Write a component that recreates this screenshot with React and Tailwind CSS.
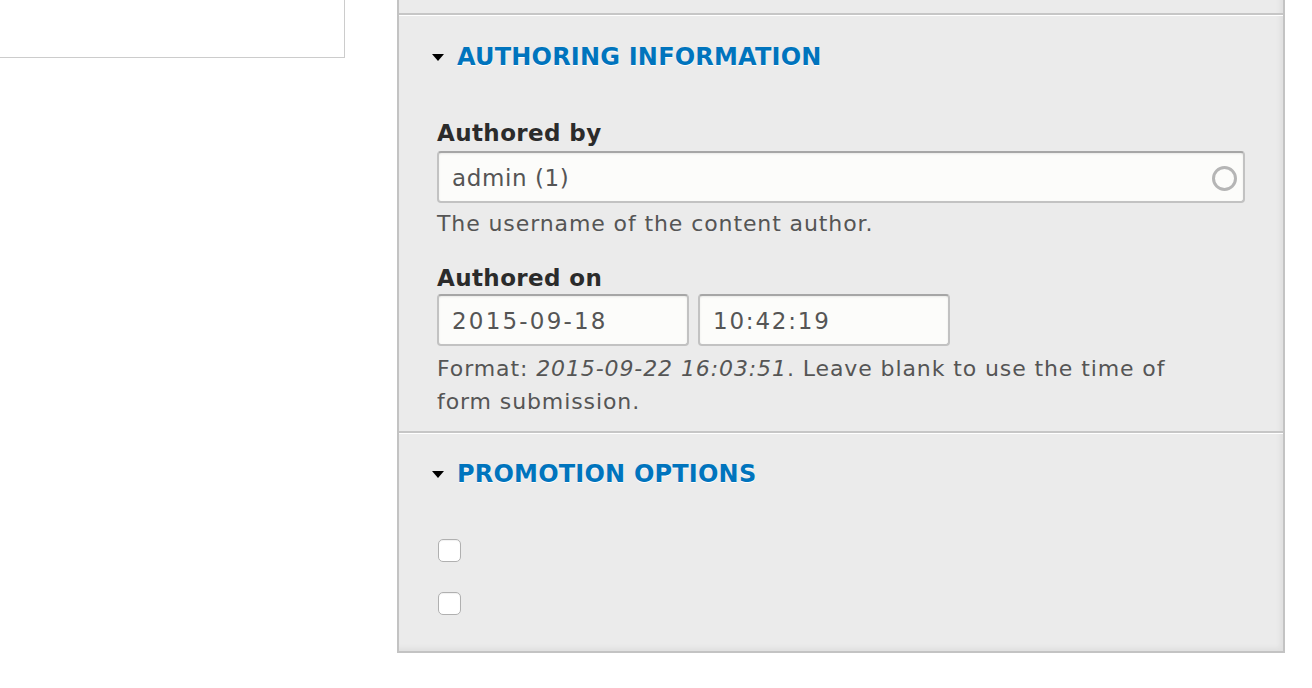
import React from "react";

const font = "font-['DejaVu_Sans','Liberation_Sans',sans-serif]";

function Caret() {
  return (
    <svg width="12" height="7" viewBox="0 0 12 7" className="shrink-0">
      <path d="M0 0 L12 0 L6 7 Z" fill="#000" />
    </svg>
  );
}

function Summary({ title, className }) {
  return (
    <div className={"flex items-center pl-[33px] " + className}>
      <Caret />
      <span className="ml-[13px] text-[24px] font-bold leading-none tracking-[0.2px] text-[#0074bd] [text-shadow:0_1px_0_#fff]">
        {title}
      </span>
    </div>
  );
}

function TextInput({ value, className, textClass, children }) {
  return (
    <div
      className={
        "flex items-center h-[52px] pl-[13px] pr-[6px] pt-[3px] rounded-[4px] border-2 border-[#c2c2c2] border-t-[#a6a6a6] bg-[#fcfcfa] shadow-[inset_0_1px_2px_rgba(0,0,0,0.08)] text-[23px] text-[#555] " +
        className
      }
    >
      <span className={"flex-1 " + textClass}>{value}</span>
      {children}
    </div>
  );
}

function Checkbox() {
  return (
    <div className="w-[23px] h-[23px] rounded-[5px] border border-[#b0b0b0] bg-white shadow-[inset_0_1px_1px_rgba(0,0,0,0.06)]" />
  );
}

export default function App() {
  return (
    <div className={"min-h-screen bg-white overflow-hidden " + font}>
      <div className="flex -mt-[40px]">
        <div className="w-[397px] shrink-0">
          <div className="-ml-[20px] w-[365px] h-[98px] border border-[#cccccc] bg-white" />
        </div>
        <div className="w-[888px] shrink-0 border-2 border-[#c3c3c3] bg-[#ebebeb] shadow-[inset_-3px_-3px_5px_rgba(0,0,0,0.05)]">
          <div className="h-[53px] border-b-2 border-[#c6c6c6]" />
          <div className="border-t border-white border-b-2 border-b-[#c6c6c6] pb-[13px]">
            <Summary title="AUTHORING INFORMATION" className="h-[82px]" />
            <div className="px-[38px] mt-[20px]">
              <div className="text-[23px] font-bold leading-[30px] tracking-[0.4px] text-[#2b2b2b]">
                Authored by
              </div>
              <TextInput
                value="admin (1)"
                className="mt-[3px]"
                textClass="tracking-[0.6px]"
              >
                <div className="w-[25px] h-[25px] rounded-full border-[3px] border-[#b5b5b5]" />
              </TextInput>
              <div className="mt-[6px] text-[22px] leading-[30px] tracking-[0.9px] text-[#555]">
                The username of the content author.
              </div>
              <div className="mt-[24px] text-[23px] font-bold leading-[30px] tracking-[0.4px] text-[#2b2b2b]">
                Authored on
              </div>
              <div className="flex gap-[9px] mt-px">
                <TextInput
                  value="2015-09-18"
                  className="w-[252px]"
                  textClass="tracking-[2.2px]"
                />
                <TextInput
                  value="10:42:19"
                  className="w-[252px]"
                  textClass="tracking-[1.8px]"
                />
              </div>
              <div className="mt-[6px] w-[770px] text-[22px] leading-[33px] tracking-[0.9px] text-[#555]">
                Format: <em>2015-09-22 16:03:51</em>. Leave blank to use the
                time of form submission.
              </div>
            </div>
          </div>
          <div className="border-t border-white pb-[36px]">
            <Summary title="PROMOTION OPTIONS" className="h-[80px]" />
            <div className="px-[39px] mt-[25px] flex flex-col gap-[30px]">
              <Checkbox />
              <Checkbox />
            </div>
          </div>
        </div>
      </div>
    </div>
  );
}
